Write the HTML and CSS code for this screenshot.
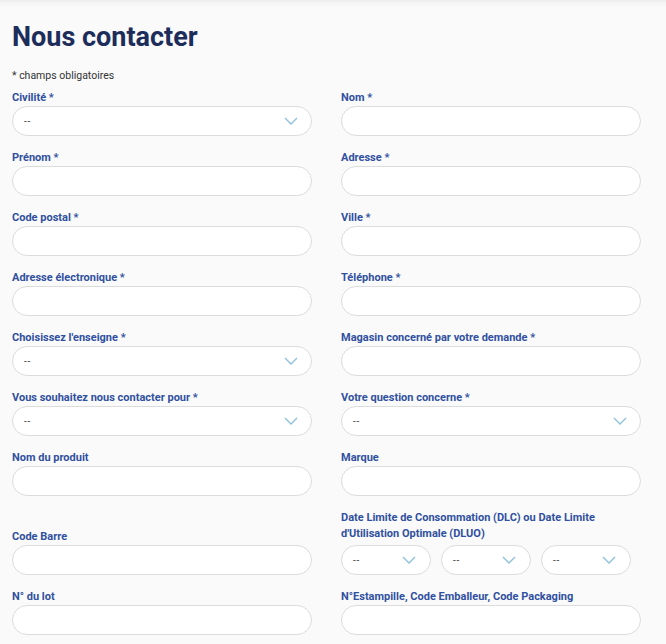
FILE: index.html
```html
<!DOCTYPE html>
<html lang="fr">
<head>
<meta charset="utf-8">
<title>Nous contacter</title>
<link rel="stylesheet" href="styles.css">
</head>
<body>
<div class="page">
  <h1 class="title">Nous contacter</h1>
  <p class="note">* champs obligatoires</p>
  <form class="form">
    <div class="field"><label class="label">Civilité *</label><div class="input select"><span class="ph">--</span><svg class="chev" viewBox="0 0 14 8"><polyline points="1,1 7,7 13,1"/></svg></div></div>
    <div class="field"><label class="label">Nom *</label><div class="input"></div></div>

    <div class="field"><label class="label">Prénom *</label><div class="input"></div></div>
    <div class="field"><label class="label">Adresse *</label><div class="input"></div></div>

    <div class="field"><label class="label">Code postal *</label><div class="input"></div></div>
    <div class="field"><label class="label">Ville *</label><div class="input"></div></div>

    <div class="field"><label class="label">Adresse électronique *</label><div class="input"></div></div>
    <div class="field"><label class="label">Téléphone *</label><div class="input"></div></div>

    <div class="field"><label class="label">Choisissez l'enseigne *</label><div class="input select"><span class="ph">--</span><svg class="chev" viewBox="0 0 14 8"><polyline points="1,1 7,7 13,1"/></svg></div></div>
    <div class="field"><label class="label">Magasin concerné par votre demande *</label><div class="input"></div></div>

    <div class="field"><label class="label">Vous souhaitez nous contacter pour *</label><div class="input select"><span class="ph">--</span><svg class="chev" viewBox="0 0 14 8"><polyline points="1,1 7,7 13,1"/></svg></div></div>
    <div class="field"><label class="label">Votre question concerne *</label><div class="input select"><span class="ph">--</span><svg class="chev" viewBox="0 0 14 8"><polyline points="1,1 7,7 13,1"/></svg></div></div>

    <div class="field"><label class="label">Nom du produit</label><div class="input"></div></div>
    <div class="field"><label class="label">Marque</label><div class="input"></div></div>

    <div class="field"><label class="label">Code Barre</label><div class="input"></div></div>
    <div class="field"><label class="label label-multi">Date Limite de Consommation (DLC) ou Date Limite d'Utilisation Optimale (DLUO)</label>
      <div class="date-row">
        <div class="input select small"><span class="ph">--</span><svg class="chev" viewBox="0 0 14 8"><polyline points="1,1 7,7 13,1"/></svg></div>
        <div class="input select small"><span class="ph">--</span><svg class="chev" viewBox="0 0 14 8"><polyline points="1,1 7,7 13,1"/></svg></div>
        <div class="input select small"><span class="ph">--</span><svg class="chev" viewBox="0 0 14 8"><polyline points="1,1 7,7 13,1"/></svg></div>
      </div>
    </div>

    <div class="field"><label class="label">N° du lot</label><div class="input"></div></div>
    <div class="field"><label class="label">N°Estampille, Code Emballeur, Code Packaging</label><div class="input"></div></div>
  </form>
</div>
</body>
</html>
```
FILE: styles.css
```css
html, body {
  margin: 0;
  padding: 0;
  background: #fafafa;
}
body {
  font-family: Roboto, "Liberation Sans", Arial, sans-serif;
  background: linear-gradient(to bottom, #ececec 0, #f7f7f7 4px, #fafafa 8px);
  height: 644px;
  overflow: hidden;
}
.page {
  padding: 19px 0 0 12px;
}
.title {
  margin: 0;
  font-size: 27px;
  line-height: 36px;
  font-weight: 700;
  color: #1d2d5b;
}
.note {
  margin: 13px 0 0;
  font-size: 10.5px;
  line-height: 16px;
  color: #333;
}
.form {
  display: grid;
  grid-template-columns: 300px 300px;
  column-gap: 29px;
  row-gap: 13px;
  margin-top: 5px;
}
.field {
  display: flex;
  flex-direction: column;
  justify-content: flex-end;
}
.label {
  display: block;
  font-size: 11px;
  line-height: 16px;
  font-weight: 700;
  color: #3050a0;
  padding-top: 1px;
}
.label-multi {
  margin-bottom: 3px;
}
.input {
  box-sizing: border-box;
  height: 30px;
  border: 1px solid #dcdcdc;
  border-radius: 15px;
  background: #fff;
  display: flex;
  align-items: center;
  padding: 0 13px 0 11px;
}
.select {
  justify-content: space-between;
}
.ph {
  font-size: 10px;
  color: #444;
  letter-spacing: 0.8px;
}
.chev {
  width: 14px;
  height: 8px;
  fill: none;
  stroke: #8cc0db;
  stroke-width: 1.3;
}
.date-row {
  display: flex;
  gap: 10px;
}
.small {
  width: 90px;
  padding-right: 14px;
}
```
